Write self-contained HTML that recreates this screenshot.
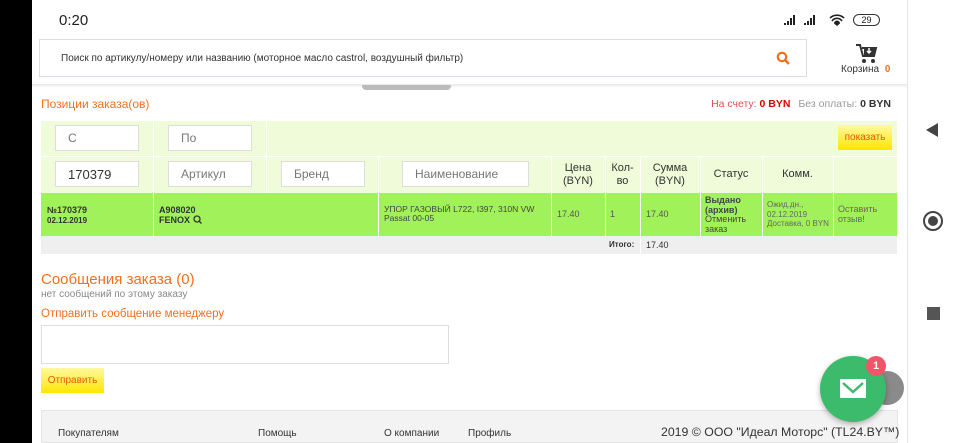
<!DOCTYPE html>
<html><head><meta charset="utf-8"><style>
*{margin:0;padding:0;box-sizing:border-box}
body{width:960px;height:443px;overflow:hidden;background:#fff;font-family:"Liberation Sans",sans-serif;position:relative}
.a{position:absolute}
.inp{position:absolute;background:#fff;border:1px solid #ddd;font-size:12px;color:#777;padding-left:12px;display:flex;align-items:center}
.t{position:absolute;font-size:11px;color:#333}
.vl{position:absolute;width:1px;background:#fff}
</style></head><body>
<div class="a" style="left:0;top:0;width:32px;height:443px;background:#000"></div>
<div class="a" style="left:907px;top:0;width:1px;height:443px;background:#e6e6e6"></div>
<div class="a" style="left:59px;top:12px;font-size:15px;color:#222">0:20</div>
<svg class="a" style="left:783px;top:13px" width="66" height="14"><path d="M1 12h2v-2H1zM4 12h2V8H4zM7 12h2V5H7zM10 12h2V2h-2zM21 12h2v-2h-2zM24 12h2V8h-2zM27 12h2V5h-2zM30 12h2V2h-2z" fill="#222"/><path d="M47 5a10 10 0 0 1 14 0M49 8a6 6 0 0 1 10 0" stroke="#222" stroke-width="1.6" fill="none"/><path d="M51 10.5a3 3 0 0 1 6 0L54 13z" fill="#222"/></svg>
<div class="a" style="left:853px;top:14px;width:27px;height:12px;border:1px solid #333;border-radius:6px;font-size:9px;text-align:center;line-height:10px;color:#222">29</div>
<!-- header -->
<div class="a" style="left:32px;top:84px;width:875px;height:4px;background:linear-gradient(#e8e8e8,#fff)"></div>
<div class="a" style="left:39px;top:39px;width:768px;height:38px;border:1px solid #dcdce4;font-size:10px;color:#333;padding:13px 0 0 21px">Поиск по артикулу/номеру или названию (моторное масло castrol, воздушный фильтр)</div>
<svg class="a" style="left:776px;top:51px" width="14" height="14"><circle cx="6" cy="6" r="4.2" fill="none" stroke="#f36f1c" stroke-width="2.2"/><path d="M9 9l4 4" stroke="#f36f1c" stroke-width="2.4"/></svg>
<svg class="a" style="left:855px;top:43px" width="24" height="22"><path d="M1 2h4l3 11h11l2-8H7" fill="none" stroke="#333" stroke-width="2"/><rect x="9" y="4" width="11" height="8" fill="#333"/><path d="M14 5v5M12 8l2 2 2-2" stroke="#fff" stroke-width="1.5" fill="none"/><circle cx="9" cy="18" r="2" fill="#333"/><circle cx="18" cy="18" r="2" fill="#333"/></svg>
<div class="a" style="left:841px;top:64px;font-size:10px;color:#333">Корзина <b style="color:#f36f1c;margin-left:3px">0</b></div>
<div class="a" style="left:362px;top:85px;width:89px;height:5px;background:#bbb;border-radius:0 0 4px 4px"></div>
<!-- positions -->
<div class="a" style="left:41px;top:97px;font-size:12px;color:#f36f1c">Позиции заказа(ов)</div>
<div class="a" style="right:69px;top:98px;font-size:10.5px;color:#e05050;white-space:nowrap">На счету: <b style="color:#d00">0 BYN</b> <span style="color:#999;margin-left:5px">Без оплаты: <b style="color:#333">0 BYN</b></span></div>
<div class="a" style="left:41px;top:121px;width:856px;height:72px;background:#effbd9"></div>
<div class="a" style="left:41px;top:156px;width:856px;height:1px;background:#fff"></div>
<div class="vl" style="left:153px;top:121px;height:115px"></div>
<div class="vl" style="left:266px;top:121px;height:35px"></div>
<div class="vl" style="left:266px;top:156px;height:37px"></div>
<div class="vl" style="left:378px;top:156px;height:80px"></div>
<div class="vl" style="left:551px;top:156px;height:80px"></div>
<div class="vl" style="left:605px;top:156px;height:80px"></div>
<div class="vl" style="left:640px;top:156px;height:80px"></div>
<div class="vl" style="left:700px;top:156px;height:80px"></div>
<div class="vl" style="left:762px;top:156px;height:80px"></div>
<div class="vl" style="left:833px;top:156px;height:80px"></div>
<div class="inp" style="left:55px;top:125px;width:84px;height:26px">С</div>
<div class="inp" style="left:168px;top:125px;width:84px;height:26px">По</div>
<div class="a" style="left:838px;top:125px;width:54px;height:25px;background:linear-gradient(#fff9a0,#ffe600);font-size:10px;color:#e05a10;text-align:center;line-height:25px">показать</div>
<div class="inp" style="left:55px;top:161px;width:84px;height:26px;color:#333;font-size:13px">170379</div>
<div class="inp" style="left:168px;top:161px;width:84px;height:26px">Артикул</div>
<div class="inp" style="left:281px;top:161px;width:84px;height:26px">Бренд</div>
<div class="inp" style="left:402px;top:161px;width:127px;height:26px">Наименование</div>
<div class="t" style="left:551px;top:162px;width:54px;text-align:center;line-height:13px">Цена<br>(BYN)</div>
<div class="t" style="left:605px;top:162px;width:35px;text-align:center;line-height:13px">Кол-<br>во</div>
<div class="t" style="left:640px;top:162px;width:60px;text-align:center;line-height:13px">Сумма<br>(BYN)</div>
<div class="t" style="left:700px;top:168px;width:62px;text-align:center">Статус</div>
<div class="t" style="left:762px;top:168px;width:71px;text-align:center">Комм.</div>
<div class="a" style="left:41px;top:193px;width:856px;height:43px;background:#a1f25a"></div>
<div class="vl" style="left:153px;top:193px;height:43px"></div><div class="vl" style="left:378px;top:193px;height:43px"></div><div class="vl" style="left:551px;top:193px;height:43px"></div><div class="vl" style="left:605px;top:193px;height:43px"></div><div class="vl" style="left:640px;top:193px;height:43px"></div><div class="vl" style="left:700px;top:193px;height:43px"></div><div class="vl" style="left:762px;top:193px;height:43px"></div><div class="vl" style="left:833px;top:193px;height:43px"></div>
<div class="t" style="left:47px;top:205px;font-size:9px;font-weight:bold;line-height:10px">№170379<br><span style="font-size:8px">02.12.2019</span></div>
<div class="t" style="left:159px;top:205px;font-size:9px;font-weight:bold;line-height:10px">A908020<br>FENOX <svg width="9" height="9" style="vertical-align:-1px"><circle cx="4" cy="4" r="3" fill="none" stroke="#333" stroke-width="1.3"/><path d="M6 6l2.5 2.5" stroke="#333" stroke-width="1.3"/></svg></div>
<div class="t" style="left:384px;top:205px;font-size:8.5px;line-height:9px;color:#444">УПОР ГАЗОВЫЙ L722, I397, 310N VW<br>Passat 00-05</div>
<div class="t" style="left:557px;top:209px;font-size:9px;color:#555">17.40</div>
<div class="t" style="left:610px;top:209px;font-size:9px;color:#555">1</div>
<div class="t" style="left:646px;top:209px;font-size:9px;color:#555">17.40</div>
<div class="t" style="left:705px;top:196px;font-size:9px;line-height:9.5px;color:#444"><b>Выдано<br>(архив)</b><br>Отменить<br>заказ</div>
<div class="t" style="left:767px;top:200px;font-size:8px;line-height:9.5px;color:#666">Ожид.дн.,<br>02.12.2019<br>Доставка, 0 BYN</div>
<div class="t" style="left:838px;top:205px;font-size:9px;line-height:9.5px;color:#666">Оставить<br>отзыв!</div>
<div class="a" style="left:41px;top:236px;width:856px;height:18px;background:#efefef"></div>
<div class="vl" style="left:640px;top:236px;height:18px"></div>
<div class="t" style="left:609px;top:240px;font-size:8px;font-weight:bold">Итого:</div>
<div class="t" style="left:646px;top:240px;font-size:9px">17.40</div>
<!-- messages -->
<div class="a" style="left:41px;top:271px;font-size:15px;color:#f36f1c">Сообщения заказа (0)</div>
<div class="a" style="left:41px;top:289px;font-size:10px;color:#888">нет сообщений по этому заказу</div>
<div class="a" style="left:41px;top:308px;font-size:11.5px;color:#f36f1c">Отправить сообщение менеджеру</div>
<div class="a" style="left:41px;top:325px;width:408px;height:39px;border:1px solid #ddd"></div>
<div class="a" style="left:41px;top:368px;width:63px;height:25px;background:linear-gradient(#fff9a0,#ffe600);font-size:10px;color:#e05a10;text-align:center;line-height:25px">Отправить</div>
<!-- footer -->
<div class="a" style="left:41px;top:410px;width:857px;height:33px;background:#f3f3f3;border:1px solid #e4e4e4"></div>
<div class="a" style="left:58px;top:428px;font-size:10px;color:#333">Покупателям</div>
<div class="a" style="left:258px;top:428px;font-size:10px;color:#333">Помощь</div>
<div class="a" style="left:384px;top:428px;font-size:10px;color:#333">О компании</div>
<div class="a" style="left:468px;top:428px;font-size:10px;color:#333">Профиль</div>
<div class="a" style="left:661px;top:425px;font-size:12.3px;color:#333;white-space:nowrap">2019 © ООО "Идеал Моторс" (TL24.BY™)</div>
<!-- chat -->
<div class="a" style="left:870px;top:371px;width:34px;height:34px;border-radius:50%;background:#8a8a8a"></div>
<div class="a" style="left:820px;top:356px;width:66px;height:66px;border-radius:50%;background:#3dbb6c;box-shadow:0 2px 6px rgba(0,0,0,.3)"></div>
<svg class="a" style="left:840px;top:379px" width="26" height="19"><rect width="26" height="19" fill="#fff"/><path d="M3 4l10 9 10-9" fill="none" stroke="#3dbb6c" stroke-width="2.5"/></svg>
<div class="a" style="left:866px;top:356px;width:20px;height:20px;border-radius:50%;background:#f25468;color:#fff;font-size:11px;font-weight:bold;text-align:center;line-height:20px">1</div>
<!-- nav -->
<svg class="a" style="left:925px;top:122px" width="14" height="16"><path d="M13 1v14L1 8z" fill="#444"/></svg>
<div class="a" style="left:923px;top:211px;width:20px;height:20px;border-radius:50%;border:2px solid #444;background:#fff"></div>
<div class="a" style="left:928px;top:216px;width:10px;height:10px;border-radius:50%;background:#444"></div>
<div class="a" style="left:927px;top:307px;width:13px;height:13px;background:#555"></div>
</body></html>
